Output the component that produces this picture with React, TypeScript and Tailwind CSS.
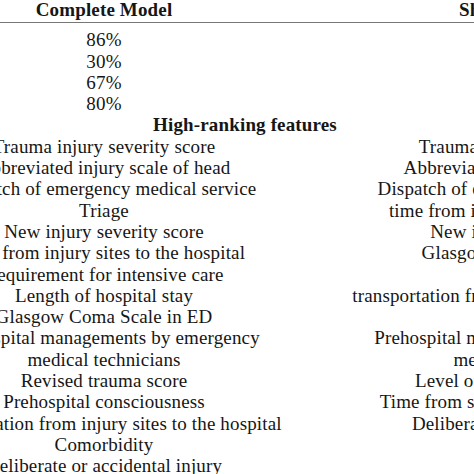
import React from "react";

type Row = { complete: string; shortened: string };

const metrics: Row[] = [
  { complete: "86%", shortened: "" },
  { complete: "30%", shortened: "" },
  { complete: "67%", shortened: "" },
  { complete: "80%", shortened: "" },
];

const features: Row[] = [
  { complete: "Trauma injury severity score", shortened: "Trauma injury severity score" },
  { complete: "Abbreviated injury scale of head", shortened: "Abbreviated injury scale of head" },
  { complete: "Dispatch of emergency medical service", shortened: "Dispatch of emergency medical service" },
  { complete: "Triage", shortened: "time from injury sites to the hospital" },
  { complete: "New injury severity score", shortened: "New injury severity score" },
  { complete: "time from injury sites to the hospital", shortened: "Glasgow Coma Scale in ED" },
  { complete: "Requirement for intensive care", shortened: "Triage" },
  { complete: "Length of hospital stay", shortened: "transportation from injury sites to the hospital" },
  { complete: "Glasgow Coma Scale in ED", shortened: "Comorbidity" },
  { complete: "Prehospital managements by emergency", shortened: "Prehospital managements by emergency" },
  { complete: "medical technicians", shortened: "medical technicians" },
  { complete: "Revised trauma score", shortened: "Level of consciousness in ED" },
  { complete: "Prehospital consciousness", shortened: "Time from scene arrival to the hospital" },
  { complete: "transportation from injury sites to the hospital", shortened: "Deliberate or accidental injury" },
  { complete: "Comorbidity", shortened: "" },
  { complete: "Deliberate or accidental injury", shortened: "" },
];

const TableRow = ({ row }: { row: Row }) => (
  <div className="flex h-[21.3px] items-center">
    <div className="w-[400px] shrink-0 text-center whitespace-nowrap">{row.complete}</div>
    <div className="w-[452px] shrink-0 text-center whitespace-nowrap">{row.shortened}</div>
  </div>
);

export default function App() {
  return (
    <main className="h-[474px] w-[474px] overflow-hidden bg-white text-[19px] leading-[21.3px] tracking-[0.15px] text-[#161616] [font-family:'Liberation_Serif',serif]">
      <div className="ml-[-96px] w-[852px]">
        <div className="mt-[-1px] flex h-[21.3px] items-center border-b border-[#777] pb-[2px] box-content font-bold">
          <div className="w-[400px] shrink-0 text-center whitespace-nowrap">Complete Model</div>
          <div className="w-[452px] shrink-0 text-center whitespace-nowrap">Shortened Model</div>
        </div>
        <div className="pt-[6px]">
          {metrics.map((r, i) => (
            <TableRow key={i} row={r} />
          ))}
          <div className="flex h-[21.3px] w-[682px] items-center justify-center font-bold whitespace-nowrap">
            High-ranking features
          </div>
          {features.map((r, i) => (
            <TableRow key={i} row={r} />
          ))}
        </div>
      </div>
    </main>
  );
}
